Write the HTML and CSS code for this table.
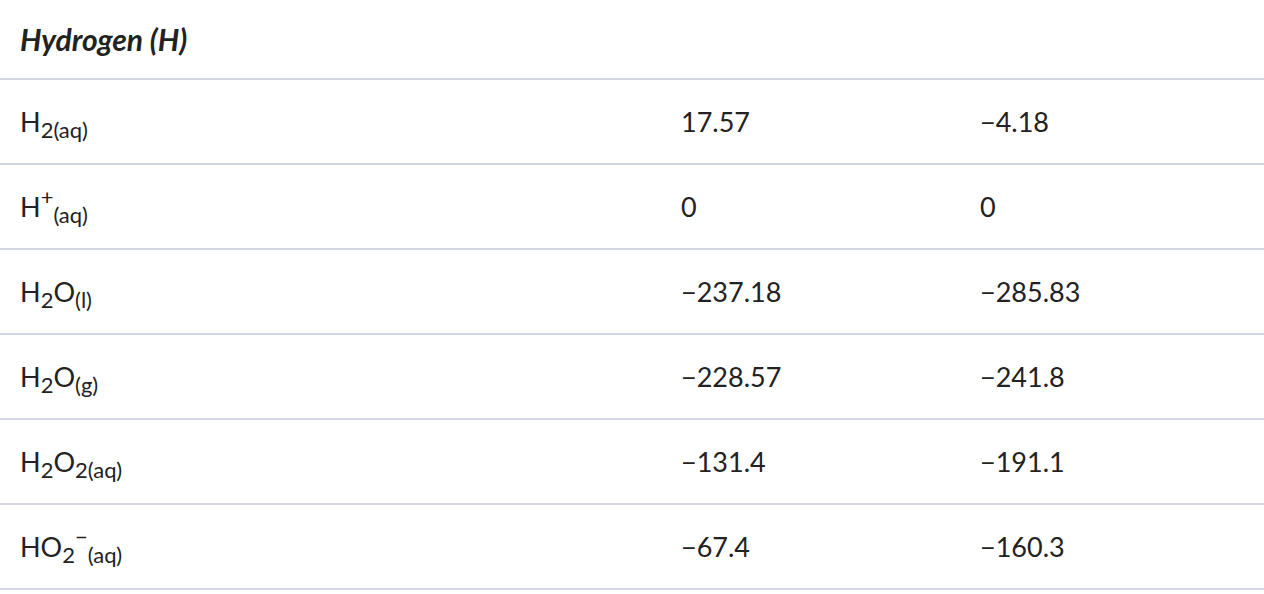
FILE: index.html
```html
<!DOCTYPE html>
<html>
<head>
<meta charset="utf-8">
<link rel="stylesheet" href="styles.css">
</head>
<body>
<table class="data">
  <colgroup>
    <col class="c-species">
    <col class="c-gibbs">
    <col class="c-enthalpy">
  </colgroup>
  <tbody>
    <tr class="group"><th colspan="3">Hydrogen (H)</th></tr>
    <tr><td>H<sub>2(aq)</sub></td><td>17.57</td><td>−4.18</td></tr>
    <tr><td>H<sup>+</sup><sub>(aq)</sub></td><td>0</td><td>0</td></tr>
    <tr><td>H<sub>2</sub>O<sub>(l)</sub></td><td>−237.18</td><td>−285.83</td></tr>
    <tr><td>H<sub>2</sub>O<sub>(g)</sub></td><td>−228.57</td><td>−241.8</td></tr>
    <tr><td>H<sub>2</sub>O<sub>2(aq)</sub></td><td>−131.4</td><td>−191.1</td></tr>
    <tr><td>HO<sub>2</sub><sup>−</sup><sub>(aq)</sub></td><td>−67.4</td><td>−160.3</td></tr>
  </tbody>
</table>
</body>
</html>
```
FILE: styles.css
```css
html, body {
  margin: 0;
  padding: 0;
  background: #ffffff;
}
body {
  font-family: Lato, "Open Sans", sans-serif;
  color: #222222;
}
.data {
  width: 1264px;
  border-collapse: collapse;
  table-layout: fixed;
}
.c-species { width: 661px; }
.c-gibbs { width: 299px; }
.c-enthalpy { width: 304px; }
.data th,
.data td {
  text-align: left;
  padding: 0 0 0 20px;
  border-bottom: 2px solid #d3d6e4;
  font-size: 27px;
  font-weight: 400;
  vertical-align: middle;
}
.data th {
  height: 78px;
  font-weight: 700;
  font-style: italic;
  font-size: 30px;
}
.data td {
  height: 83px;
}
.data sub,
.data sup {
  font-size: 22px;
  line-height: 0;
}
.data sub { vertical-align: -6px; }
.data sup { vertical-align: 12px; }
```
